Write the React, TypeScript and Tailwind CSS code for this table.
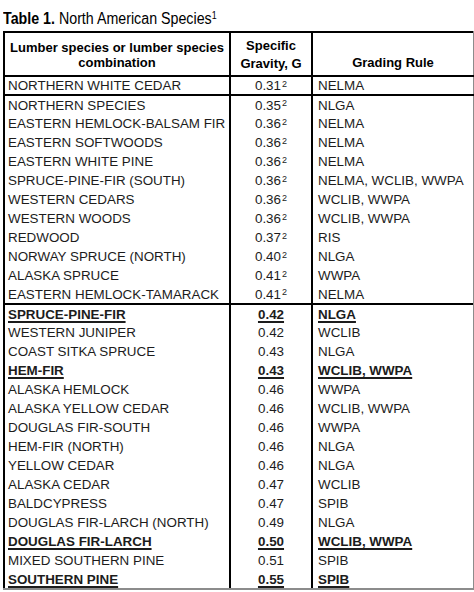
import React from 'react';

type Row = {
  name: string;
  sg: string;
  sup?: boolean;
  rule: string;
  bold?: boolean;
};

const first: Row = { name: 'NORTHERN WHITE CEDAR', sg: '0.31', sup: true, rule: 'NELMA' };

const groupA: Row[] = [
  { name: 'NORTHERN SPECIES', sg: '0.35', sup: true, rule: 'NLGA' },
  { name: 'EASTERN HEMLOCK-BALSAM FIR', sg: '0.36', sup: true, rule: 'NELMA' },
  { name: 'EASTERN SOFTWOODS', sg: '0.36', sup: true, rule: 'NELMA' },
  { name: 'EASTERN WHITE PINE', sg: '0.36', sup: true, rule: 'NELMA' },
  { name: 'SPRUCE-PINE-FIR (SOUTH)', sg: '0.36', sup: true, rule: 'NELMA, WCLIB, WWPA' },
  { name: 'WESTERN CEDARS', sg: '0.36', sup: true, rule: 'WCLIB, WWPA' },
  { name: 'WESTERN WOODS', sg: '0.36', sup: true, rule: 'WCLIB, WWPA' },
  { name: 'REDWOOD', sg: '0.37', sup: true, rule: 'RIS' },
  { name: 'NORWAY SPRUCE (NORTH)', sg: '0.40', sup: true, rule: 'NLGA' },
  { name: 'ALASKA SPRUCE', sg: '0.41', sup: true, rule: 'WWPA' },
  { name: 'EASTERN HEMLOCK-TAMARACK', sg: '0.41', sup: true, rule: 'NELMA' },
];

const groupB: Row[] = [
  { name: 'SPRUCE-PINE-FIR', sg: '0.42', rule: 'NLGA', bold: true },
  { name: 'WESTERN JUNIPER', sg: '0.42', rule: 'WCLIB' },
  { name: 'COAST SITKA SPRUCE', sg: '0.43', rule: 'NLGA' },
  { name: 'HEM-FIR', sg: '0.43', rule: 'WCLIB, WWPA', bold: true },
  { name: 'ALASKA HEMLOCK', sg: '0.46', rule: 'WWPA' },
  { name: 'ALASKA YELLOW CEDAR', sg: '0.46', rule: 'WCLIB, WWPA' },
  { name: 'DOUGLAS FIR-SOUTH', sg: '0.46', rule: 'WWPA' },
  { name: 'HEM-FIR (NORTH)', sg: '0.46', rule: 'NLGA' },
  { name: 'YELLOW CEDAR', sg: '0.46', rule: 'NLGA' },
  { name: 'ALASKA CEDAR', sg: '0.47', rule: 'WCLIB' },
  { name: 'BALDCYPRESS', sg: '0.47', rule: 'SPIB' },
  { name: 'DOUGLAS FIR-LARCH (NORTH)', sg: '0.49', rule: 'NLGA' },
  { name: 'DOUGLAS FIR-LARCH', sg: '0.50', rule: 'WCLIB, WWPA', bold: true },
  { name: 'MIXED SOUTHERN PINE', sg: '0.51', rule: 'SPIB' },
  { name: 'SOUTHERN PINE', sg: '0.55', rule: 'SPIB', bold: true },
];

const Cell = ({ text, bold }: { text: React.ReactNode; bold?: boolean }) =>
  bold ? <span className="font-bold underline decoration-[1.5px] underline-offset-2">{text}</span> : <>{text}</>;

const Sup = () => <sup className="text-[9px] -top-[3.5px] ml-[1px]">2</sup>;

function DataRow({ r, topBorder, last }: { r: Row; topBorder?: boolean; last?: boolean }) {
  const b = `${topBorder ? 'border-t-2 border-t-black' : ''} ${last ? 'border-b-2 border-b-[#8c8c8c]' : ''}`;
  return (
    <tr className="h-[19px]">
      <td className={`border-x-2 border-black pl-[3px] ${b}`}>
        <Cell text={r.name} bold={r.bold} />
      </td>
      <td className={`border-x-2 border-black text-center ${b}`}>
        <Cell
          text={
            <>
              {r.sg}
              {r.sup && <Sup />}
            </>
          }
          bold={r.bold}
        />
      </td>
      <td className={`border-l-2 border-l-black border-r-2 border-r-[#8c8c8c] pl-[5px] ${b}`}>
        <Cell text={r.rule} bold={r.bold} />
      </td>
    </tr>
  );
}

export default function App() {
  return (
    <div
      className="w-[474px] h-[592px] bg-white overflow-hidden text-[#1c1c1c]"
      style={{ fontFamily: '"Liberation Sans", Arial, sans-serif' }}
    >
      <div className="pl-[3px] pt-[9px] h-[31px] text-[16px] leading-[20px] text-black whitespace-nowrap">
        <div className="inline-block origin-left scale-x-[0.89]">
          <span className="font-bold">Table 1.</span> North American Species
          <sup className="text-[10px]">1</sup>
        </div>
      </div>
      <table className="ml-[3px] w-[470px] border-collapse table-fixed text-[13.4px] leading-[15px] whitespace-nowrap">
        <colgroup>
          <col className="w-[226px]" />
          <col className="w-[82px]" />
          <col className="w-[162px]" />
        </colgroup>
        <thead>
          <tr className="h-[44px] font-bold text-black text-[13px]">
            <th className="border-2 border-black align-bottom pb-[5px] leading-[15px] font-bold">
              Lumber species or lumber species
              <br />
              combination
            </th>
            <th className="border-2 border-black align-bottom pb-[2px] leading-[18px] font-bold">
              Specific
              <br />
              Gravity, G
            </th>
            <th className="border-2 border-black border-r-[#8c8c8c] align-bottom pb-[5px] font-bold">
              Grading Rule
            </th>
          </tr>
        </thead>
        <tbody>
          <tr className="h-[19px]">
            <td className="border-2 border-black pl-[3px]">{first.name}</td>
            <td className="border-2 border-black text-center">
              {first.sg}
              <Sup />
            </td>
            <td className="border-2 border-black border-r-[#8c8c8c] pl-[5px]">{first.rule}</td>
          </tr>
          {groupA.map((r) => (
            <DataRow key={r.name} r={r} />
          ))}
          {groupB.map((r, i) => (
            <DataRow key={r.name} r={r} topBorder={i === 0} last={i === groupB.length - 1} />
          ))}
        </tbody>
      </table>
    </div>
  );
}
